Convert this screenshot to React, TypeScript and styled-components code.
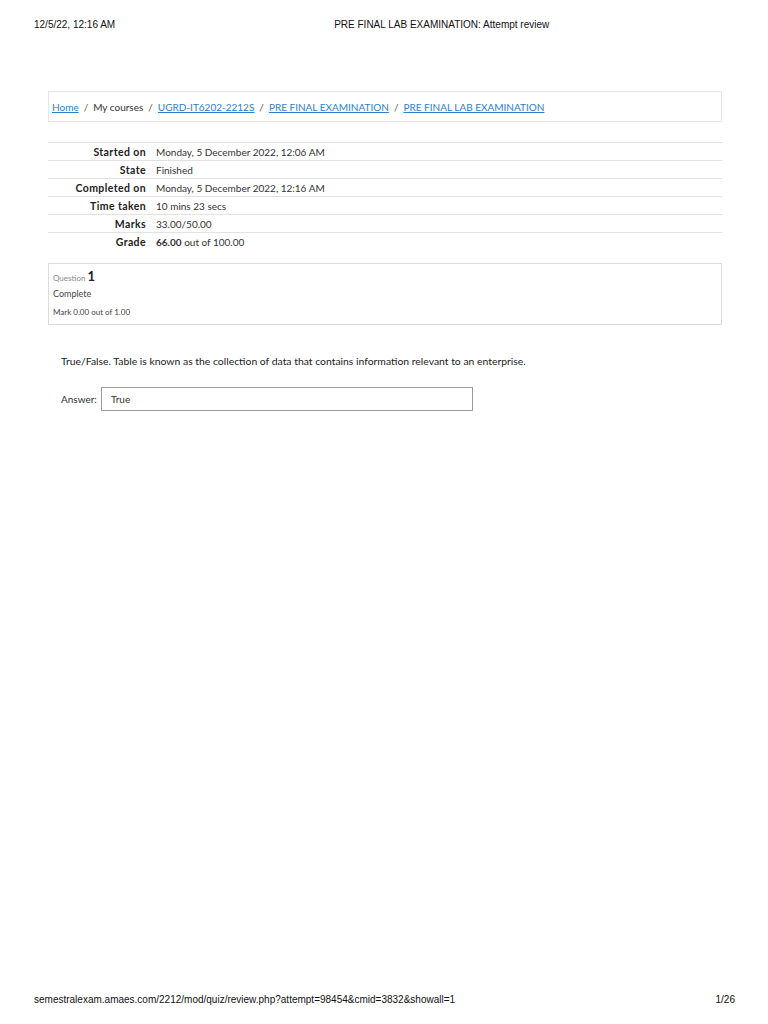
import styled, { createGlobalStyle } from "styled-components";

const GlobalStyle = createGlobalStyle`
  html, body {
    margin: 0;
    padding: 0;
    background: #ffffff;
  }
`;

const Page = styled.div`
  width: 768px;
  height: 1024px;
  display: flex;
  flex-direction: column;
  box-sizing: border-box;
  font-family: "Lato", "Open Sans", sans-serif;
  color: #333333;
  -webkit-font-smoothing: antialiased;
`;

const PrintBar = styled.div`
  height: 48px;
  padding: 0 33px 0 34px;
  display: flex;
  align-items: center;
  font-family: "Liberation Sans", Arial, sans-serif;
  font-size: 10px;
  color: #111111;
`;

const PrintTitle = styled.span`
  margin-left: 219px;
`;

const PrintFooter = styled(PrintBar)`
  margin-top: auto;
  height: 50px;
  justify-content: space-between;
  align-items: flex-start;
  padding-top: 20px;
  box-sizing: border-box;
`;

const Main = styled.main`
  padding: 43px 46px 0 48px;
  display: flex;
  flex-direction: column;
`;

const Breadcrumb = styled.nav`
  height: 31px;
  box-sizing: border-box;
  border: 1px solid #e6e6e6;
  padding: 0 3px;
  display: flex;
  align-items: center;
  gap: 5px;
  font-size: 10px;
`;

const Crumb = styled.a`
  color: #2a7fd0;
  text-decoration: underline;
`;

const Sep = styled.span`
  color: #555555;
`;

const Summary = styled.div`
  margin-top: 20px;
  display: flex;
  flex-direction: column;
`;

const SummaryRow = styled.div`
  height: 18px;
  box-sizing: border-box;
  border-top: 1px solid #e2e2e2;
  display: grid;
  grid-template-columns: 98px 1fr;
  column-gap: 10px;
  align-items: center;
  font-size: 10px;
`;

const SummaryLabel = styled.span`
  text-align: right;
  font-weight: 700;
  font-size: 10.5px;
  letter-spacing: 0.4px;
  color: #222222;
`;

const SummaryValue = styled.span`
  color: #333333;
`;

const QuestionInfo = styled.div`
  margin-top: 13px;
  height: 62px;
  box-sizing: border-box;
  border: 1px solid #dcdcdc;
  padding: 3px 4px;
  display: flex;
  flex-direction: column;
`;

const QuestionNo = styled.div`
  height: 18px;
  display: flex;
  align-items: baseline;
  gap: 2px;
  font-size: 8px;
  color: #888888;
  line-height: 18px;
`;

const QuestionNum = styled.span`
  font-size: 13px;
  font-weight: 700;
  color: #222222;
`;

const InfoLine = styled.div<{ $size: number }>`
  height: 18px;
  line-height: 18px;
  font-size: ${(p) => p.$size}px;
  color: #444444;
`;

const QuestionText = styled.p`
  margin: 30px 0 0 13px;
  font-size: 10.4px;
  color: #222222;
`;

const AnswerRow = styled.div`
  margin: 20px 0 0 13px;
  display: flex;
  align-items: center;
  gap: 4px;
  font-size: 10px;
`;

const AnswerBox = styled.div`
  width: 372px;
  height: 24px;
  box-sizing: border-box;
  border: 1px solid #9a9a9a;
  padding: 0 9px;
  display: flex;
  align-items: center;
  color: #333333;
`;

const rows: [string, React.ReactNode][] = [
  ["Started on", "Monday, 5 December 2022, 12:06 AM"],
  ["State", "Finished"],
  ["Completed on", "Monday, 5 December 2022, 12:16 AM"],
  ["Time taken", "10 mins 23 secs"],
  ["Marks", "33.00/50.00"],
  [
    "Grade",
    <>
      <b>66.00</b> out of 100.00
    </>,
  ],
];

export default function App() {
  return (
    <>
      <GlobalStyle />
      <Page>
        <PrintBar>
          <span>12/5/22, 12:16 AM</span>
          <PrintTitle>PRE FINAL LAB EXAMINATION: Attempt review</PrintTitle>
        </PrintBar>
        <Main>
          <Breadcrumb>
            <Crumb>Home</Crumb>
            <Sep>/</Sep>
            <span>My courses</span>
            <Sep>/</Sep>
            <Crumb>UGRD-IT6202-2212S</Crumb>
            <Sep>/</Sep>
            <Crumb>PRE FINAL EXAMINATION</Crumb>
            <Sep>/</Sep>
            <Crumb>PRE FINAL LAB EXAMINATION</Crumb>
          </Breadcrumb>
          <Summary>
            {rows.map(([label, value]) => (
              <SummaryRow key={label}>
                <SummaryLabel>{label}</SummaryLabel>
                <SummaryValue>{value}</SummaryValue>
              </SummaryRow>
            ))}
          </Summary>
          <QuestionInfo>
            <QuestionNo>
              Question <QuestionNum>1</QuestionNum>
            </QuestionNo>
            <InfoLine $size={9}>Complete</InfoLine>
            <InfoLine $size={8}>Mark 0.00 out of 1.00</InfoLine>
          </QuestionInfo>
          <QuestionText>
            True/False. Table is known as the collection of data that contains
            information relevant to an enterprise.
          </QuestionText>
          <AnswerRow>
            <span>Answer:</span>
            <AnswerBox>True</AnswerBox>
          </AnswerRow>
        </Main>
        <PrintFooter>
          <span>
            semestralexam.amaes.com/2212/mod/quiz/review.php?attempt=98454&amp;cmid=3832&amp;showall=1
          </span>
          <span>1/26</span>
        </PrintFooter>
      </Page>
    </>
  );
}
